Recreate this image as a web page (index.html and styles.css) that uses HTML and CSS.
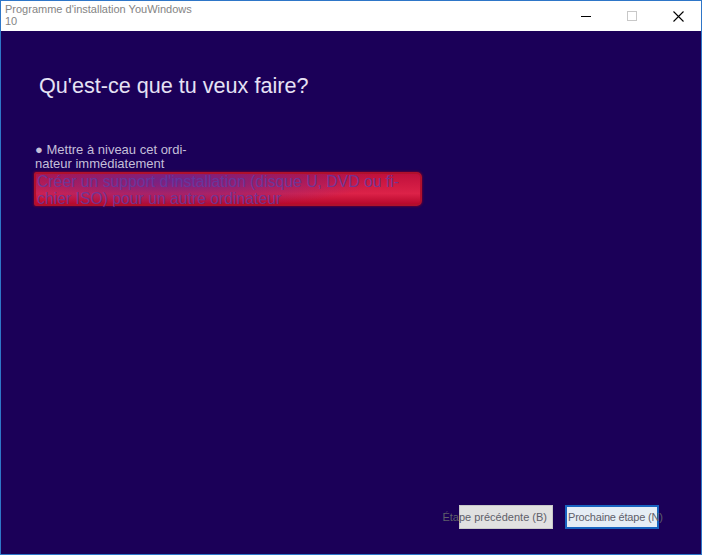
FILE: index.html
```html
<!DOCTYPE html>
<html lang="fr">
<head>
     <meta charset="UTF-8">
     <meta name="viewport" content="width=device-width, initial-scale=1.0">
     <title>Programme d'installation YouWindows 10</title>
     <link rel="stylesheet" href="styles.css">
</head>
<body>
     <div class="window">
          <div class="titlebar">
               <div class="title">Programme d'installation YouWindows 10</div>
               <div class="controls">
                    <span class="ctl">
                         <svg width="10" height="10" viewBox="0 0 10 10"><path d="M0 5.5H10" stroke="#000" stroke-width="1"/></svg>
                    </span>
                    <span class="ctl">
                         <svg width="10" height="10" viewBox="0 0 10 10"><rect x="0.5" y="0.5" width="9" height="9" fill="none" stroke="#c8c8c8" stroke-width="1"/></svg>
                    </span>
                    <span class="ctl">
                         <svg width="11" height="11" viewBox="0 0 11 11"><path d="M0.5 0.5L10.5 10.5M10.5 0.5L0.5 10.5" stroke="#000" stroke-width="1.1"/></svg>
                    </span>
               </div>
          </div>
          <div class="content">
               <h1 class="heading">Qu'est-ce que tu veux faire?</h1>
               <div class="options">
                    <div class="option">● Mettre à niveau cet ordi-<br>nateur immédiatement</div>
                    <div class="option selected">Créer un support d'installation (disque U, DVD ou fi-<br>chier ISO) pour un autre ordinateur</div>
               </div>
               <div class="footer">
                    <button type="button" class="btn back">Étape précédente (B)</button>
                    <button type="button" class="btn next">Prochaine étape (N)</button>
               </div>
          </div>
     </div>
</body>
</html>
```
FILE: styles.css
```css
html, body {
     margin: 0;
     padding: 0;
}

body {
     font-family: "Liberation Sans", Arial, sans-serif;
     background: #ffffff;
}

.window {
     width: 702px;
     height: 555px;
     box-sizing: border-box;
     border: 1px solid #2e76c8;
     display: flex;
     flex-direction: column;
}

.titlebar {
     height: 30px;
     background: #ffffff;
     display: flex;
     justify-content: space-between;
}

.title {
     width: 192px;
     padding: 2px 0 0 4px;
     font-size: 11px;
     line-height: 12px;
     color: #848484;
}

.controls {
     display: flex;
}

.ctl {
     width: 46px;
     height: 30px;
     display: flex;
     align-items: center;
     justify-content: center;
}

.content {
     flex: 1;
     background: #1b0058;
     display: flex;
     flex-direction: column;
}

.heading {
     margin: 42px 0 0 38px;
     font-size: 21.6px;
     font-weight: normal;
     line-height: 26px;
     color: #e6e2f4;
}

.options {
     margin: 44px 0 0 33px;
     display: flex;
     flex-direction: column;
     align-items: flex-start;
}

.option {
     font-size: 13px;
     line-height: 13.5px;
     color: #c4bfd8;
     padding-left: 1px;
}

.selected {
     margin-top: 2px;
     width: 383px;
     height: 30px;
     padding: 0 0 0 1px;
     font-size: 15.75px;
     line-height: 16.5px;
     color: rgba(95, 60, 165, 0.8);
     border: 2px solid #b0102c;
     border-radius: 2px 5px 5px 2px;
     background:
          radial-gradient(ellipse 200px 28px at 140px 6px, rgba(110, 35, 140, 0.95), rgba(110, 35, 140, 0) 100%),
          linear-gradient(180deg, #c0103c 0%, #dc2248 65%, #b8082c 100%);
     box-shadow: 0 0 2px 1px rgba(120, 0, 40, 0.6);
}

.footer {
     margin-top: auto;
     padding: 0 42px 25px 0;
     display: flex;
     justify-content: flex-end;
     gap: 12px;
}

.btn {
     width: 94px;
     height: 24px;
     box-sizing: border-box;
     padding: 0 5px 0 0;
     font-family: "Liberation Sans", Arial, sans-serif;
     font-size: 11px;
     color: #5f5f6a;
     white-space: nowrap;
     display: flex;
     align-items: center;
     border-radius: 0;
     cursor: pointer;
}

.back {
     background: #e1e1e1;
     border: 1px solid #c8c8c8;
     justify-content: flex-end;
}

.next {
     background: #e5edf5;
     border: 2px solid #1864c0;
     padding: 0 0 0 1px;
     letter-spacing: -0.2px;
     justify-content: flex-start;
}
```
